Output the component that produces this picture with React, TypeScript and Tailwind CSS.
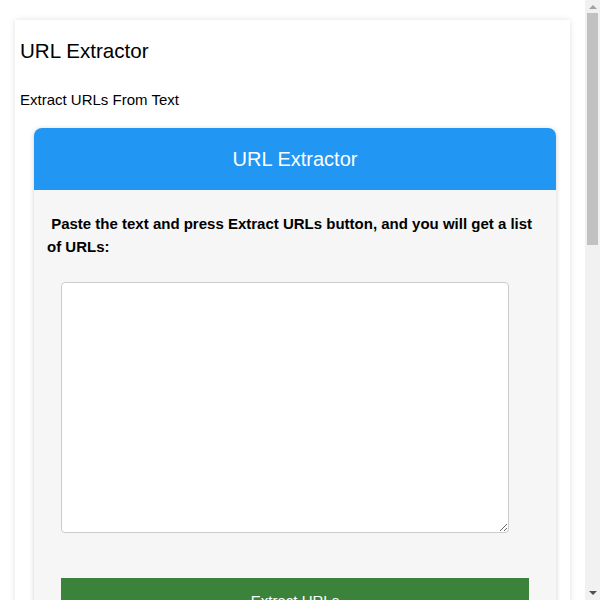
export default function App() {
  return (
    <div className="flex h-screen overflow-hidden bg-white font-['Liberation_Sans',Arial,sans-serif] text-black">
      <div className="w-[585px] shrink-0 px-[15px] pt-5">
        <div className="min-h-[1440px] bg-white pl-[5px] pt-[19px] shadow-[0_0_6px_rgba(0,0,0,0.12)]">
          <h1 className="text-[20.6px] leading-[23px] font-normal">URL Extractor</h1>
          <p className="mt-[29px] text-[15px] leading-[17px]">Extract URLs From Text</p>

          <div className="ml-[14px] mt-[20px] w-[522px] overflow-hidden rounded-lg bg-[#f6f6f6] shadow-[0_1px_5px_rgba(0,0,0,0.2)]">
            <div className="flex h-[62px] items-center justify-center bg-[#2196f3] text-[20px] text-white">
              URL Extractor
            </div>
            <div className="px-[13px] pt-[22px] pb-10">
              <p className="text-[15px] leading-[23px] font-bold">
                {'\u00a0'}Paste the text and press Extract URLs button, and you will get a list of URLs:
              </p>
              <div className="ml-[14px] mt-[24px]">
                <textarea className="block h-[251px] w-[448px] rounded border border-[#ccc] bg-white p-2 text-[15px] outline-none" />
                <button className="mt-[45px] block h-[46px] w-[468px] bg-[#3b833b] text-[15px] text-white">
                  Extract URLs
                </button>
              </div>
            </div>
          </div>
        </div>
      </div>

      {/* scrollbar */}
      <div className="flex w-[15px] shrink-0 flex-col items-center bg-[#f1f1f1]">
        <div className="flex h-[13px] items-center justify-center">
          <svg width="8" height="4" viewBox="0 0 8 4">
            <path d="M0 4 L4 0 L8 4 Z" fill="#a3a3a3" />
          </svg>
        </div>
        <div className="h-[232px] w-[11px] bg-[#c1c1c1]" />
        <div className="flex-1" />
        <div className="flex h-[15px] items-center justify-center">
          <svg width="8" height="4" viewBox="0 0 8 4">
            <path d="M0 0 L8 0 L4 4 Z" fill="#505050" />
          </svg>
        </div>
      </div>
    </div>
  )
}
